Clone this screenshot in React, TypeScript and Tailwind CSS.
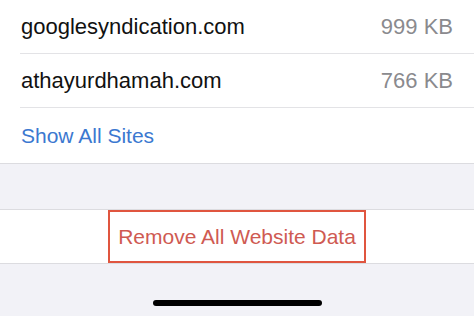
const sites = [
  { name: 'googlesyndication.com', size: '999 KB' },
  { name: 'athayurdhamah.com', size: '766 KB' },
]

export default function App() {
  return (
    <div
      className="w-[474px] h-[316px] overflow-hidden bg-[#f2f2f7] flex flex-col"
      style={{ fontFamily: '"Liberation Sans", Arial, sans-serif' }}
    >
      {/* Site list */}
      <div className="bg-white border-b border-[#dcdce0]">
        {sites.map((site) => (
          <div key={site.name} className="pl-[20px]">
            <div className="h-[54px] flex items-center justify-between pr-[21px] border-b border-[#e3e3e6] text-[22px]">
              <span className="text-[#111111] pl-px">{site.name}</span>
              <span className="text-[#8a8a8e]">{site.size}</span>
            </div>
          </div>
        ))}
        <div className="h-[55px] flex items-center pl-[21px] text-[21px] text-[#3b78d0]">
          Show All Sites
        </div>
      </div>

      {/* Spacer */}
      <div className="h-[45px]" />

      {/* Destructive action */}
      <div className="bg-white border-y border-[#dcdce0] h-[55px] flex justify-center">
        <span className="h-full flex items-center px-[8px] border-2 border-[#e0553f] text-[21px] text-[#cf5a52]">
          Remove All Website Data
        </span>
      </div>

      {/* Home indicator */}
      <div className="flex justify-center pt-[36px]">
        <div className="w-[169px] h-[6px] rounded-full bg-black" />
      </div>
    </div>
  )
}
